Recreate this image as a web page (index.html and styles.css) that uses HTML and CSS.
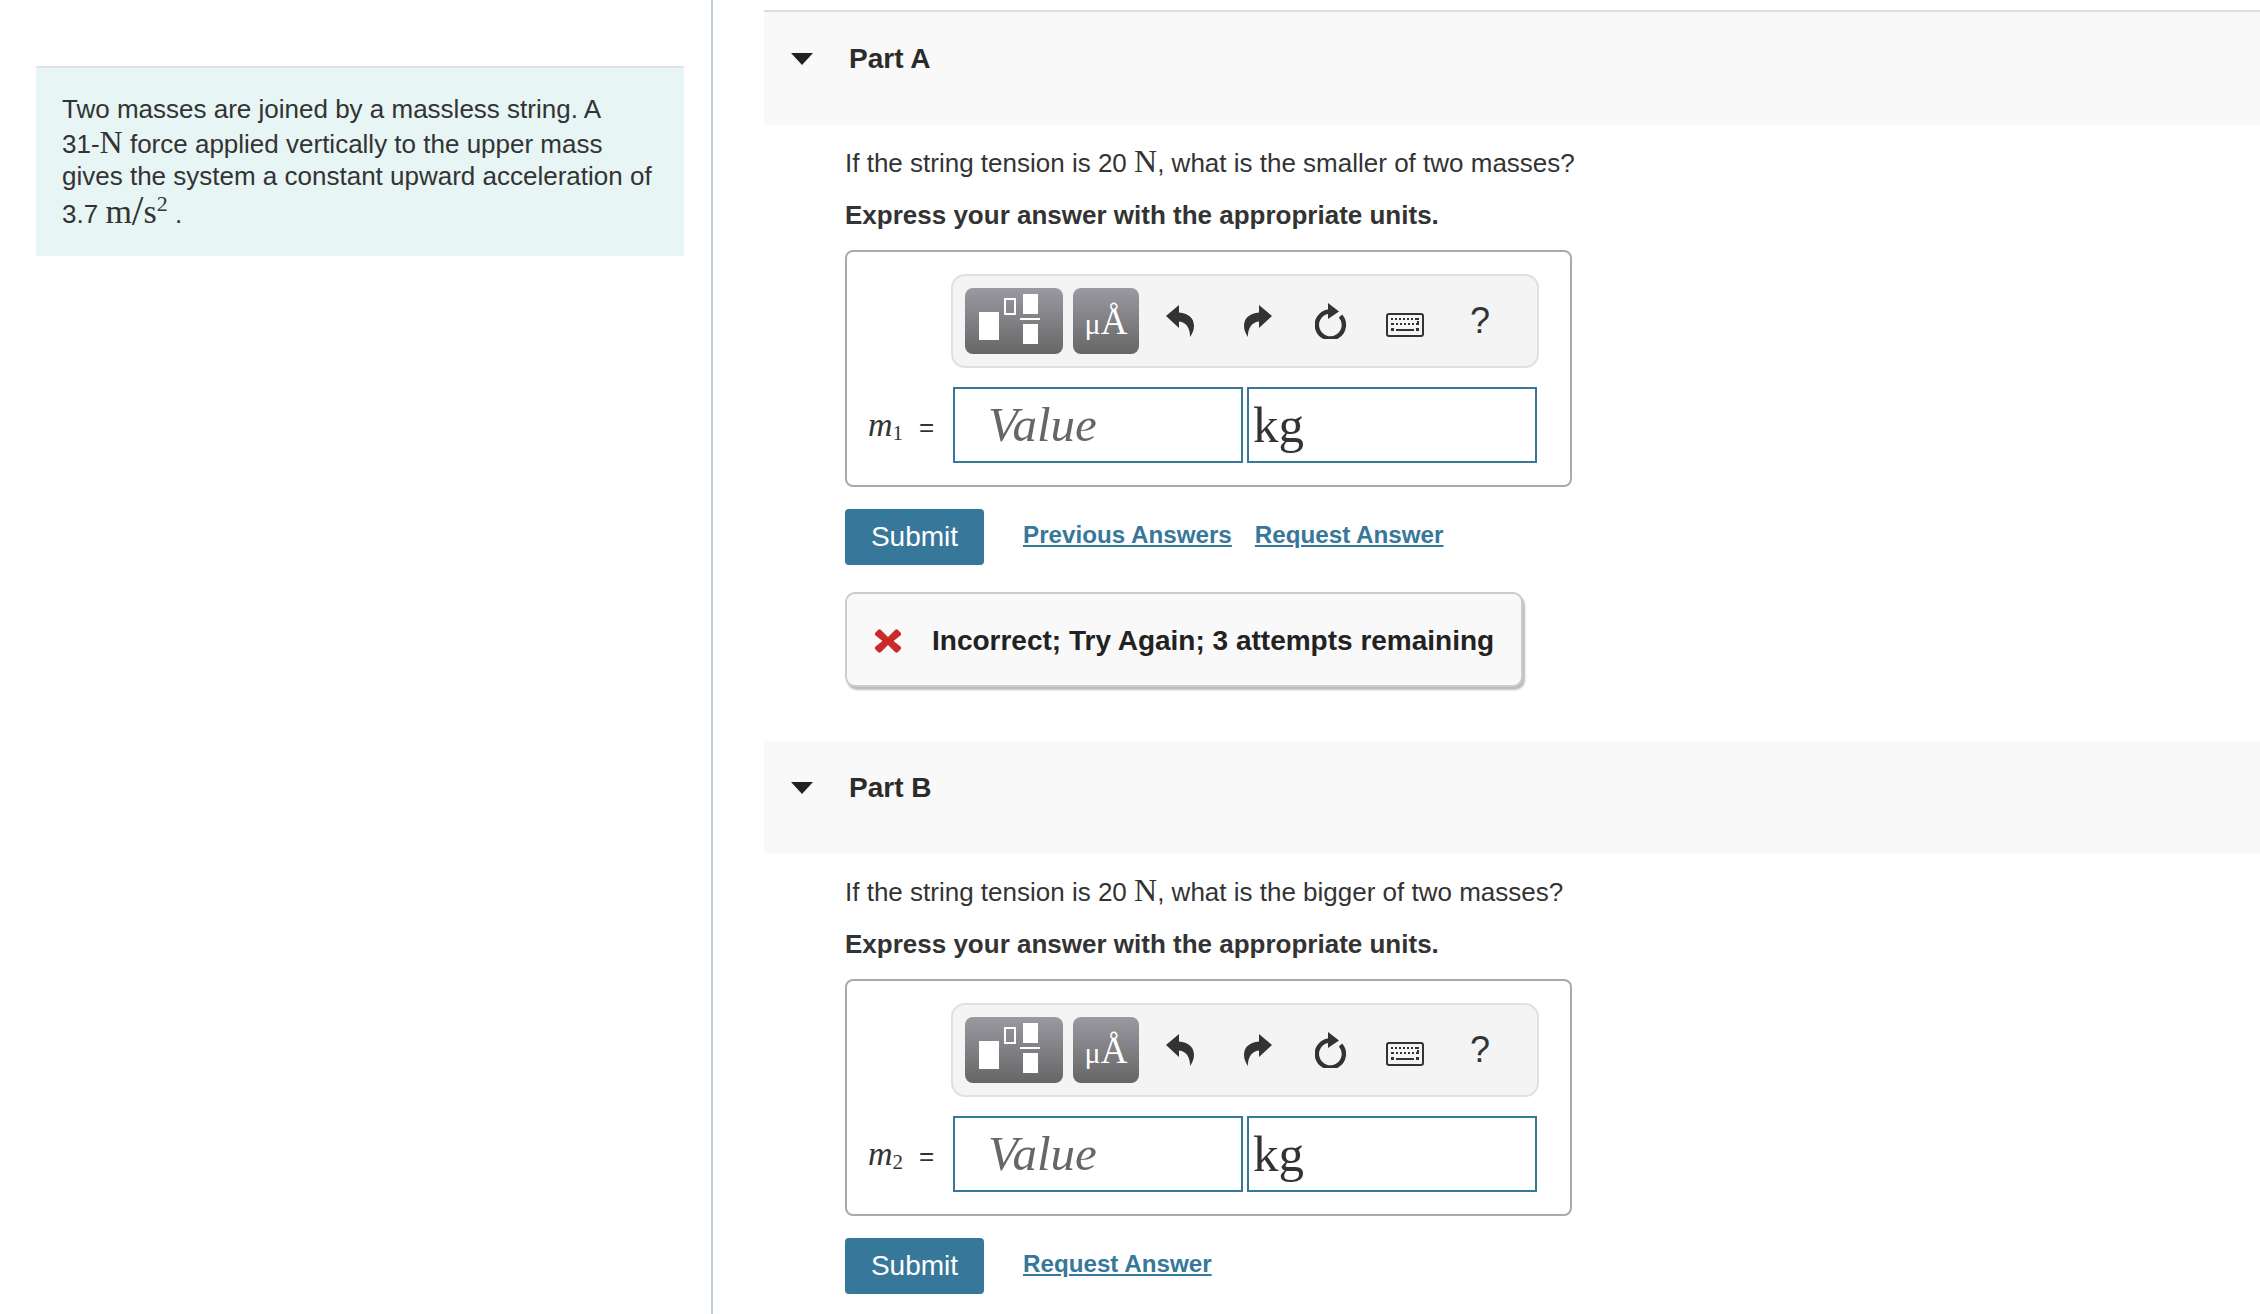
FILE: index.html
```html
<!DOCTYPE html>
<html lang="en">
<head>
    <meta charset="UTF-8">
    <meta name="viewport" content="width=device-width, initial-scale=1.0">
    <title>Two masses problem</title>
    <link rel="stylesheet" href="styles.css">
</head>
<body>

    <svg class="sprites" aria-hidden="true">
        <symbol id="icon-undo" viewBox="0 0 28 32">
            <path d="M0 11 L13 0 V7.5 C22 8 28 13 28 21 C28 25.500 26 29 24 32 C24.500 25 21 17 13 16.500 V23 Z"/>
        </symbol>
        <symbol id="icon-redo" viewBox="0 0 28 32">
            <path d="M28 11 L15 0 V7.5 C6 8 0 13 0 21 C0 25.500 2 29 4 32 C3.500 25 7 17 15 16.500 V23 Z"/>
        </symbol>
        <symbol id="icon-reset" viewBox="0 0 32 36">
            <path d="M14 8.500 A13.500 13.500 0 1 0 25.500 13" fill="none" stroke="currentColor" stroke-width="4.400"/>
            <path d="M13 0 L24 8.500 L13 16 Z"/>
        </symbol>
        <symbol id="icon-keyboard" viewBox="0 0 38 24">
            <rect x="1" y="1" width="36" height="22" rx="2" fill="none" stroke="currentColor" stroke-width="2"/>
            <path d="M5 5h2v2h-2z M9 5h2v2h-2z M13 5h2v2h-2z M17 5h2v2h-2z M21 5h2v2h-2z M25 5h2v2h-2z M29 5h4v2h-4z M5 10h3v2h-3z M10 10h2v2h-2z M14 10h2v2h-2z M18 10h2v2h-2z M22 10h2v2h-2z M26 10h2v2h-2z M31 8h2v4h-2z M30 10h3v2h-3z M5 15h3v3h-3z M10 16h18v2h-18z M30 15h3v3h-3z"/>
        </symbol>
        <symbol id="icon-templates" viewBox="0 0 98 66">
            <rect x="14" y="24" width="20" height="28" fill="#fff"/>
            <rect x="40" y="11" width="10" height="15" fill="none" stroke="#fff" stroke-width="2"/>
            <rect x="58" y="6" width="15" height="20" fill="#fff"/>
            <rect x="55" y="30" width="20" height="2" fill="#fff"/>
            <rect x="58" y="36" width="15" height="20" fill="#fff"/>
        </symbol>
    </svg>

    <div class="page">
        <aside class="sidebar">
            <div class="intro">
                Two masses are joined by a massless string. A<br>
                31-<span class="math n">N</span> force applied vertically to the upper mass<br>
                gives the system a constant upward acceleration of<br>
                3.7 <span class="math">m<span class="slash">/</span>s<sup>2</sup></span> .
            </div>
        </aside>

        <main class="content">
            <section class="part part-first">
                <div class="part-head">
                    <span class="caret"></span>
                    <h2>Part A</h2>
                </div>
                <div class="part-body">
                    <p class="question">If the string tension is 20 <span class="math n">N</span>, what is the smaller of two masses?</p>
                    <p class="express">Express your answer with the appropriate units.</p>
                    <div class="answer">
                        <div class="toolbar">
                            <button class="tool templates"><svg width="98" height="66"><use href="#icon-templates"/></svg></button>
                            <button class="tool units"><span class="mu">μ</span>Å</button>
                            <svg class="icon undo" width="28" height="32"><use href="#icon-undo"/></svg>
                            <svg class="icon redo" width="28" height="32"><use href="#icon-redo"/></svg>
                            <svg class="icon reset" width="32" height="36"><use href="#icon-reset"/></svg>
                            <svg class="icon keyboard" width="38" height="24"><use href="#icon-keyboard"/></svg>
                            <span class="help">?</span>
                        </div>
                        <div class="entry">
                            <label class="var"><i>m</i><sub>1</sub><span class="eq">=</span></label>
                            <div class="field value">Value</div>
                            <div class="field unit">kg</div>
                        </div>
                    </div>
                    <div class="actions">
                        <button class="submit">Submit</button>
                        <a class="link" href="#">Previous Answers</a>
                        <a class="link" href="#">Request Answer</a>
                    </div>
                    <div class="feedback">
                        <svg class="cross" width="28" height="26" viewBox="0 0 28 26"><path d="M7 2 L14 9 L21 2 Q22.500 0.500 24 2 L26.500 4.500 Q28 6 26.500 7.500 L19.500 13 L26.500 18.500 Q28 20 26.500 21.500 L24 24 Q22.500 25.500 21 24 L14 17 L7 24 Q5.500 25.500 4 24 L1.500 21.500 Q0 20 1.500 18.500 L8.500 13 L1.500 7.500 Q0 6 1.500 4.500 L4 2 Q5.500 0.500 7 2 Z"/></svg>
                        <span>Incorrect; Try Again; 3 attempts remaining</span>
                    </div>
                </div>
            </section>

            <section class="part">
                <div class="part-head">
                    <span class="caret"></span>
                    <h2>Part B</h2>
                </div>
                <div class="part-body">
                    <p class="question">If the string tension is 20 <span class="math n">N</span>, what is the bigger of two masses?</p>
                    <p class="express">Express your answer with the appropriate units.</p>
                    <div class="answer">
                        <div class="toolbar">
                            <button class="tool templates"><svg width="98" height="66"><use href="#icon-templates"/></svg></button>
                            <button class="tool units"><span class="mu">μ</span>Å</button>
                            <svg class="icon undo" width="28" height="32"><use href="#icon-undo"/></svg>
                            <svg class="icon redo" width="28" height="32"><use href="#icon-redo"/></svg>
                            <svg class="icon reset" width="32" height="36"><use href="#icon-reset"/></svg>
                            <svg class="icon keyboard" width="38" height="24"><use href="#icon-keyboard"/></svg>
                            <span class="help">?</span>
                        </div>
                        <div class="entry">
                            <label class="var"><i>m</i><sub>2</sub><span class="eq">=</span></label>
                            <div class="field value">Value</div>
                            <div class="field unit">kg</div>
                        </div>
                    </div>
                    <div class="actions">
                        <button class="submit">Submit</button>
                        <a class="link" href="#">Request Answer</a>
                    </div>
                </div>
            </section>
        </main>
    </div>

</body>
</html>
```

FILE: styles.css
```css
html, body {
    height: 100%;
    margin: 0;
    overflow: hidden;
}

body {
    font-family: 'Liberation Sans', Arial, sans-serif;
    font-size: 26px;
    color: #333;
    background: #fff;
}

.sprites {
    display: none;
}

.page {
    display: flex;
    height: 100vh;
}

.sidebar {
    width: 713px;
    flex-shrink: 0;
    box-sizing: border-box;
    padding: 66px 27px 0 36px;
    border-right: 2px solid #c3d0da;
}

.intro {
    height: 190px;
    box-sizing: border-box;
    padding: 25px 26px 0;
    background: #e7f5f5;
    border-top: 2px solid #dfe3e3;
    line-height: 32.5px;
}

.math {
    font-family: 'Liberation Serif', 'Times New Roman', serif;
    font-size: 34px;
    line-height: 38px;
}

.math.n {
    font-size: 32px;
    line-height: 1;
}

.slash {
    font-size: 42px;
    line-height: 0;
    vertical-align: -2px;
}

.math sup {
    font-size: 22px;
    line-height: 0;
}

.content {
    flex: 1;
    padding: 10px 0 0 51px;
    min-width: 0;
}

.part-first {
    margin-bottom: 54px;
}

.part-head {
    height: 113px;
    box-sizing: border-box;
    display: flex;
    align-items: flex-start;
    padding: 31px 0 0 27px;
    background: #f9f9f9;
}

.part-first .part-head {
    height: 115px;
    border-top: 2px solid #dedede;
}

.caret {
    width: 0;
    height: 0;
    margin-top: 10px;
    border-left: 11px solid transparent;
    border-right: 11px solid transparent;
    border-top: 12px solid #222;
}

.part-head h2 {
    margin: 0 0 0 36px;
    font-size: 28px;
    line-height: 32px;
    color: #2b2b2b;
}

.part-body {
    padding: 20px 0 0 81px;
}

.question {
    margin: 0;
    line-height: 36px;
}

.express {
    margin: 16px 0 0;
    font-weight: bold;
    line-height: 36px;
}

.answer {
    width: 727px;
    height: 237px;
    box-sizing: border-box;
    margin: 17px 0 0;
    padding: 22px 0 0 104px;
    border: 2px solid #aaa;
    border-radius: 8px;
}

.toolbar {
    width: 588px;
    height: 94px;
    box-sizing: border-box;
    display: flex;
    align-items: center;
    padding-left: 12px;
    background: #f4f4f4;
    border: 2px solid #e0e0e0;
    border-radius: 14px;
}

.tool {
    height: 66px;
    padding: 0;
    border: none;
    border-radius: 8px;
    background: linear-gradient(#9b99a1, #666);
    color: #fff;
}

.templates {
    width: 98px;
}

.templates svg {
    display: block;
}

.units {
    width: 66px;
    margin-left: 10px;
    padding-top: 2px;
    font-family: 'Liberation Serif', 'Times New Roman', serif;
    font-size: 37px;
    line-height: 64px;
}

.mu {
    font-size: 30px;
}

.icon {
    flex-shrink: 0;
    color: #333;
    fill: #333;
}

.undo {
    margin-left: 27px;
}

.redo {
    margin-left: 50px;
}

.reset {
    margin-left: 43px;
}

.keyboard {
    margin-left: 39px;
    margin-top: 8px;
}

.help {
    margin-left: 46px;
    font-size: 36px;
    line-height: 1;
}

.entry {
    display: flex;
    align-items: center;
    margin: 19px 0 0 -104px;
}

.var {
    width: 106px;
    box-sizing: border-box;
    padding-left: 21px;
    font-family: 'Liberation Serif', 'Times New Roman', serif;
    font-size: 34px;
    white-space: nowrap;
}

.var sub {
    font-size: 21px;
    line-height: 0;
    vertical-align: -4px;
}

.eq {
    margin-left: 16px;
    font-family: 'Liberation Sans', Arial, sans-serif;
    font-size: 26px;
}

.field {
    width: 290px;
    height: 76px;
    box-sizing: border-box;
    border: 2px solid #37779a;
    font-family: 'Liberation Serif', 'Times New Roman', serif;
    line-height: 72px;
}

.value {
    padding-left: 33px;
    font-size: 49px;
    font-style: italic;
    color: #666;
}

.unit {
    margin-left: 4px;
    padding-left: 4px;
    font-size: 51px;
}

.actions {
    display: flex;
    align-items: flex-start;
    margin: 22px 0 0;
}

.submit {
    width: 139px;
    height: 56px;
    padding: 0;
    border: none;
    border-radius: 4px;
    background: #37779a;
    color: #fff;
    font-family: inherit;
    font-size: 28px;
}

.link {
    margin: 9px 0 0 23px;
    color: #37779a;
    font-weight: bold;
    font-size: 24.2px;
    line-height: 34px;
    text-decoration: underline;
}

.submit + .link {
    margin-left: 39px;
}

.feedback {
    width: 678px;
    height: 95px;
    box-sizing: border-box;
    display: flex;
    align-items: center;
    margin: 27px 0 0;
    padding: 3px 0 0 27px;
    background: #f9f9f9;
    border: 2px solid #ccc;
    border-radius: 10px;
    box-shadow: 2px 3px 2px #bbb;
    font-weight: bold;
    font-size: 28px;
    color: #222;
}

.cross {
    fill: #c92a2a;
    margin-right: 30px;
    flex-shrink: 0;
}
```
